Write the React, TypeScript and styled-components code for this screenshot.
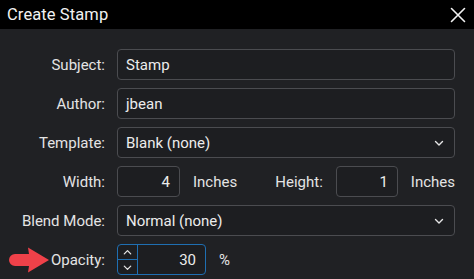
import styled, { createGlobalStyle } from 'styled-components';

const GlobalStyle = createGlobalStyle`
  html, body {
    margin: 0;
    padding: 0;
    background: #202124;
  }
  * {
    box-sizing: border-box;
  }
`;

const ChevronDown = ({ size = 12 }: { size?: number }) => (
  <svg width={size} height={size} viewBox="0 0 12 12" fill="none">
    <path d="M2.5 4.5 L6 8 L9.5 4.5" stroke="#e6e6e6" strokeWidth="1.4" strokeLinecap="round" strokeLinejoin="round" />
  </svg>
);

const ChevronUp = ({ size = 12 }: { size?: number }) => (
  <svg width={size} height={size} viewBox="0 0 12 12" fill="none">
    <path d="M2.5 7.5 L6 4 L9.5 7.5" stroke="#e6e6e6" strokeWidth="1.4" strokeLinecap="round" strokeLinejoin="round" />
  </svg>
);

const CloseIcon = () => (
  <svg width="16" height="16" viewBox="0 0 16 16" fill="none">
    <path d="M1.5 1.5 L14.5 14.5 M14.5 1.5 L1.5 14.5" stroke="#f2f2f2" strokeWidth="1.6" strokeLinecap="round" />
  </svg>
);

const PointerArrow = () => (
  <svg width="42" height="26" viewBox="0 0 42 26">
    <path d="M6 7 L20 7 L19 0.5 L40 13 L19 25.5 L20 19 L6 19 A6 6 0 0 1 6 7 Z" fill="#ef4149" />
  </svg>
);

export default function App() {
  return (
    <>
      <GlobalStyle />
      <Dialog>
        <Header>
          <Title>Create Stamp</Title>
          <CloseButton aria-label="Close">
            <CloseIcon />
          </CloseButton>
        </Header>
        <Body>
          <Label>Subject:</Label>
          <TextInput>Stamp</TextInput>

          <Label>Author:</Label>
          <TextInput>jbean</TextInput>

          <Label>Template:</Label>
          <Select>
            <span>Blank (none)</span>
            <ChevronDown />
          </Select>

          <Label>Width:</Label>
          <SplitRow>
            <Group>
              <NumberInput width={63}>4</NumberInput>
              <Unit>Inches</Unit>
            </Group>
            <Group>
              <Label>Height:</Label>
              <NumberInput width={62}>1</NumberInput>
              <Unit>Inches</Unit>
            </Group>
          </SplitRow>

          <Label>Blend Mode:</Label>
          <Select>
            <span>Normal (none)</span>
            <ChevronDown />
          </Select>

          <LabelWithMarker>
            <Marker>
              <PointerArrow />
            </Marker>
            Opacity:
          </LabelWithMarker>
          <Group>
            <Spinner>
              <SpinButtons>
                <SpinButton>
                  <ChevronUp size={11} />
                </SpinButton>
                <SpinButton>
                  <ChevronDown size={11} />
                </SpinButton>
              </SpinButtons>
              <SpinValue>30</SpinValue>
            </Spinner>
            <Unit>%</Unit>
          </Group>
        </Body>
      </Dialog>
    </>
  );
}

const Dialog = styled.div`
  width: 474px;
  height: 279px;
  background: #202124;
  font-family: Roboto, 'Liberation Sans', sans-serif;
  color: #e6e6e6;
  overflow: hidden;
`;

const Header = styled.div`
  height: 29px;
  background: #000;
  display: flex;
  align-items: center;
  justify-content: space-between;
  padding: 0 7px 0 7px;
`;

const Title = styled.div`
  font-size: 16.5px;
  color: #f2f2f2;
  letter-spacing: 0.1px;
`;

const CloseButton = styled.div`
  display: flex;
  align-items: center;
  justify-content: center;
  width: 18px;
  height: 18px;
  margin-right: 0;
`;

const Body = styled.div`
  display: grid;
  grid-template-columns: 105px 1fr;
  column-gap: 12px;
  row-gap: 8px;
  grid-auto-rows: 31px;
  padding: 20px 19px 0 0;
`;

const Label = styled.div`
  display: flex;
  align-items: center;
  justify-content: flex-end;
  font-size: 15px;
  color: #e4e4e4;
  white-space: nowrap;
`;

const LabelWithMarker = styled(Label)`
  position: relative;
`;

const Marker = styled.div`
  position: absolute;
  left: 9px;
  top: 3px;
  display: flex;
`;

const FieldBox = styled.div`
  height: 31px;
  border: 1.5px solid #4b4c50;
  border-radius: 4px;
  background: #1d1e21;
  display: flex;
  align-items: center;
  font-size: 15px;
  color: #ececec;
`;

const TextInput = styled(FieldBox)`
  padding: 0 8px;
`;

const Select = styled(FieldBox)`
  padding: 0 9px 0 8px;
  justify-content: space-between;
`;

const NumberInput = styled(FieldBox)<{ width: number }>`
  width: ${(p) => p.width}px;
  justify-content: flex-end;
  padding: 0 9px;
`;

const SplitRow = styled.div`
  display: flex;
  align-items: center;
  justify-content: space-between;
`;

const Group = styled.div`
  display: flex;
  align-items: center;
  gap: 13px;
`;

const Unit = styled.div`
  font-size: 15px;
  color: #e4e4e4;
`;

const Spinner = styled.div`
  width: 89px;
  height: 31px;
  border: 1.5px solid #1f6fb2;
  border-radius: 4px;
  display: flex;
  background: #1d1e21;
`;

const SpinButtons = styled.div`
  width: 20px;
  display: flex;
  flex-direction: column;
  border-right: 1.5px solid #1f6fb2;
`;

const SpinButton = styled.div`
  flex: 1;
  display: flex;
  align-items: center;
  justify-content: center;
  & + & {
    border-top: 1.5px solid #1f6fb2;
  }
`;

const SpinValue = styled.div`
  flex: 1;
  display: flex;
  align-items: center;
  justify-content: flex-end;
  padding-right: 9px;
  font-size: 15px;
  color: #ececec;
`;
